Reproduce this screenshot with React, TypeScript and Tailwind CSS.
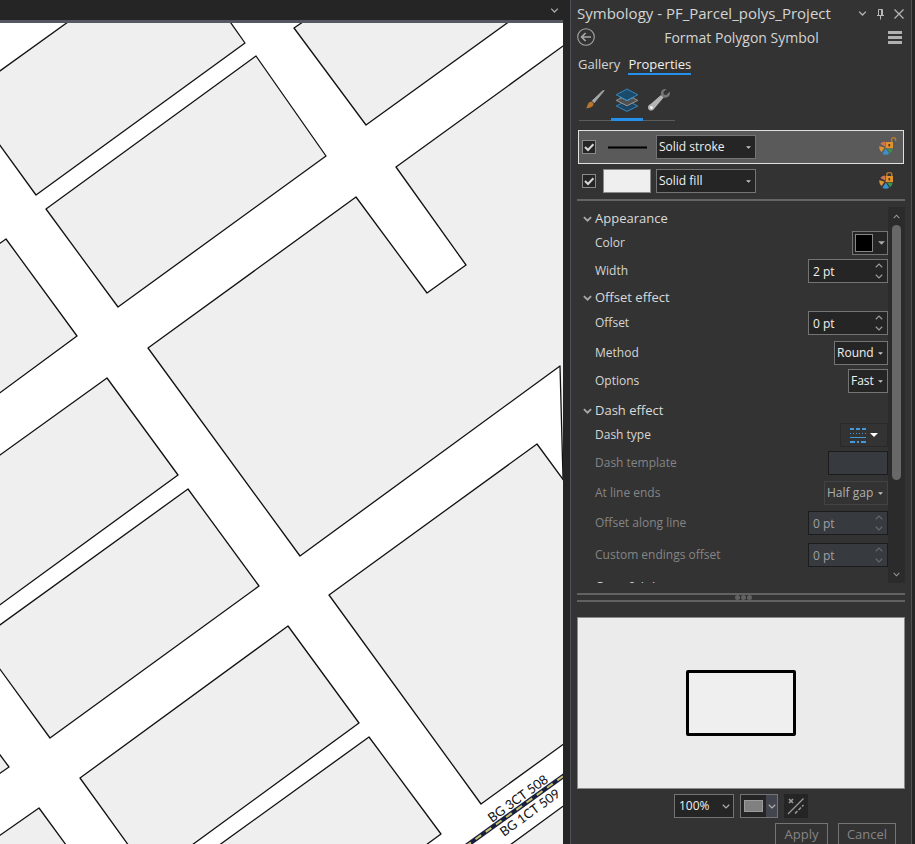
import type { ReactNode } from "react"
import clsx from "clsx"

const parcels = [
  "-14,81 86,9 221,9 245,43 36,195 -14,126",
  "256,56 326,156 118,307 46,209",
  "294,28 316,13 521,13 366,125",
  "570,41 396,167 466,265 427,293 356,197 148,348 300,556 560,366 563,478 564,560 900,560 900,-100",
  "537,444 900,938 900,500 481,804 329,595",
  "-14,253 6,239 77,336 -14,403",
  "-14,465 107,378 178,475 -14,615",
  "-14,635 188,489 259,586 50,738 -14,650",
  "288,626 359,723 166,864 142,864 80,778",
  "369,737 441,834 400,864 193,864",
  "-14,736 9,767 -14,783",
  "39,808 80,864 -14,864 -14,845",
  "900,560 900,900 484,864",
]

function MapView() {
  return (
    <section aria-label="Map" className="flex min-w-0 flex-1 flex-col bg-[#252525]">
      <div className="flex h-5 shrink-0 items-center justify-end pr-px">
        <button aria-label="Map views" className="flex size-4 items-center justify-center">
          <Chevron className="h-[5px] w-[9px] text-[#aaaaaa]" />
        </button>
      </div>
      <div className="min-h-0 flex-1 border-t-[3px] border-[#565861] bg-white">
        <svg viewBox="0 23 563 821" preserveAspectRatio="xMinYMin slice" className="size-full">
          <g fill="#efefef" stroke="#111" strokeWidth="1.3" strokeLinejoin="round">
            {parcels.map((points) => (
              <polygon key={points} points={points} />
            ))}
          </g>
          <path d="M455 854 L580 764" stroke="#191e3c" strokeWidth="4.6" />
          <path d="M455 854 L580 764" stroke="#c6c273" strokeWidth="2" strokeDasharray="7 5.6" />
          <g fill="#111" fontSize="13" className="font-['Lato',sans-serif]">
            <text transform="translate(492 823) rotate(-36)">BG 3CT 508</text>
            <text transform="translate(504 837) rotate(-36)">BG 1CT 509</text>
          </g>
        </svg>
      </div>
    </section>
  )
}

function Chevron({ className }: { className?: string }) {
  return (
    <svg viewBox="0 0 10 6" fill="none" stroke="currentColor" strokeWidth="1.5" className={className}>
      <path d="M1 0.8 L5 4.8 L9 0.8" />
    </svg>
  )
}

function Caret({ className }: { className?: string }) {
  return (
    <svg viewBox="0 0 8 4" fill="currentColor" className={className}>
      <path d="M0 0 H8 L4 4 Z" />
    </svg>
  )
}

function BrushIcon() {
  return (
    <svg viewBox="0 0 24 24" className="size-6">
      <path d="M21.2 2.6 L11.2 14.8 L9.2 12.8 L19.5 3 Z" fill="#a9a9a9" stroke="#a9a9a9" strokeWidth="0.8" />
      <path d="M8.4 13.4 L10.6 15.6 C10.6 18.6 7 20.6 3 20.2 C5 18.6 4 14 8.4 13.4 Z" fill="#b8752c" />
    </svg>
  )
}

function LayersIcon() {
  return (
    <svg viewBox="0 0 24 24" strokeWidth="1" className="size-6">
      <path d="M12 12.5 L22.8 18 L12 23.4 L1.2 18 Z" fill="#1c4664" stroke="#3487bd" />
      <path d="M12 7 L22.8 12.4 L12 17.8 L1.2 12.4 Z" fill="#505050" stroke="#969696" />
      <path d="M12 1 L22.8 6.8 L12 12.6 L1.2 6.8 Z" fill="#1b4b6b" stroke="#3487bd" />
      <path d="M5 9 L12 12.6 L19 9" fill="none" stroke="#4ba5de" strokeDasharray="2 1" />
    </svg>
  )
}

function WrenchIcon() {
  return (
    <svg viewBox="0 0 24 24" className="size-6">
      <path
        d="M22.6 3.8 L19.2 7 L16.8 6.4 L16.4 4 L19.6 1 C15.6 0.2 13 3.4 14.2 6.8 L16.6 9.4 C20.4 10.6 24.2 7.4 22.6 3.8 Z"
        fill="#77777a"
      />
      <path d="M14 7 L16.6 9.6 L7.4 20.6 C5.6 23.6 1.2 23.2 1 19.8 C0.8 17.8 2 16.8 3.4 16.2 Z" fill="#b5b5b5" />
      <circle cx="4.4" cy="19.6" r="1.3" fill="#ffffff" />
    </svg>
  )
}

function ColorLockIcon({ locked }: { locked: boolean }) {
  return (
    <svg viewBox="0 0 20 20" className="size-5">
      <path d="M8 4.4 V9.4 L3.4 7 C4.2 5.4 5.8 4.4 8 4.4 Z" fill="#cc7358" />
      <path d="M2.4 9 L7.6 10.8 L4.6 15 C2.6 13.6 2 11 2.4 9 Z" fill="#dd9234" />
      <path d="M8.8 11.6 L12.2 16.8 C10.4 18.2 7.2 18.2 5.4 16.8 Z" fill="#3b91cc" />
      <path d="M10 11.8 H15.6 C15.4 13.8 14.6 15 13.2 16.2 Z" fill="#38934a" />
      <rect x="8.6" y="5" width="7.4" height="6.2" fill="#df922f" />
      <path d="M12.3 7 V9.4" stroke="#473115" strokeWidth="1.6" />
      <path
        d={locked ? "M9.8 5 V3.2 Q9.8 1.6 12.3 1.6 Q14.8 1.6 14.8 3.2 V5" : "M14.6 5 V2.4 Q14.6 0.8 16.6 0.8 Q18.6 0.8 18.6 2.4 V4"}
        fill="none"
        stroke="#b87a2a"
        strokeWidth="1.4"
      />
    </svg>
  )
}

function DashIcon() {
  return (
    <svg viewBox="0 0 16 15" stroke="#429bd9" className="h-[15px] w-4">
      <path d="M0 1 H16" strokeWidth="2" strokeDasharray="4 2" />
      <path d="M0 5.5 H16" strokeWidth="1" strokeDasharray="1 2" />
      <path d="M0 9.5 H16" strokeWidth="1" />
      <path d="M0 14 H5 M7 14 H9 M11 14 H16" strokeWidth="2" />
    </svg>
  )
}

type SelectProps = {
  id: string
  value: string
  label?: string
  disabled?: boolean
  className?: string
}

function Select({ id, value, label, disabled, className }: SelectProps) {
  return (
    <div className={clsx("relative h-6", className)}>
      <select
        id={id}
        aria-label={label}
        disabled={disabled}
        className="block h-full w-full appearance-none border border-[#747474] bg-[#252526] pl-[2px] text-[12px] text-[#f0f0f0] disabled:border-[#434343] disabled:bg-[#333333] disabled:text-[#b0b0b0] disabled:opacity-100"
      >
        <option>{value}</option>
      </select>
      <Caret className="pointer-events-none absolute top-[11px] right-[5px] h-[3px] w-[5px] text-[#c4c4c4]" />
    </div>
  )
}

function Spinner({ id, value, disabled }: { id: string; value: string; disabled?: boolean }) {
  return (
    <div
      className={clsx(
        "flex h-6 w-20 border",
        disabled ? "border-[#1c1c1e] bg-[#373b40] text-[#a0a0a0]" : "border-[#747474] bg-[#252526] text-[#f0f0f0]"
      )}
    >
      <input id={id} defaultValue={value} disabled={disabled} className="h-full min-w-0 flex-1 pl-1 text-[12px]" />
      <div className={clsx("flex w-4 flex-col", disabled ? "text-[#65676b]" : "text-[#9c9c9c]")}>
        <button aria-label="Increase" disabled={disabled} className="flex flex-1 items-center justify-center">
          <Chevron className="h-[5px] w-2 rotate-180" />
        </button>
        <button aria-label="Decrease" disabled={disabled} className="flex flex-1 items-center justify-center">
          <Chevron className="h-[5px] w-2" />
        </button>
      </div>
    </div>
  )
}

function SectionHeader({ children, className = "h-7 pt-[2px]" }: { children: ReactNode; className?: string }) {
  return (
    <h2 className={clsx("flex items-center", className)}>
      <button className="flex items-center gap-[3px] text-[13px] font-normal text-[#dadada]">
        <Chevron className="h-[6px] w-[9px] stroke-2 text-[#a8a8a8]" />
        {children}
      </button>
    </h2>
  )
}

type RowProps = {
  label: string
  id: string
  disabled?: boolean
  className?: string
  children: ReactNode
}

function Row({ label, id, disabled, className, children }: RowProps) {
  return (
    <div className={clsx("flex items-center justify-between pl-3", className)}>
      <label htmlFor={id} className={clsx("text-[12px]", disabled ? "text-[#858585]" : "text-[#d6d6d6]")}>
        {label}
      </label>
      {children}
    </div>
  )
}

function LayerCheckbox({ label }: { label: string }) {
  return (
    <span className="relative flex size-[14px] shrink-0">
      <input
        type="checkbox"
        defaultChecked
        aria-label={label}
        className="peer size-full appearance-none border border-[#8a8a8a] bg-[#252526]"
      />
      <svg
        viewBox="0 0 14 14"
        fill="none"
        stroke="#d6d6d6"
        strokeWidth="2"
        className="pointer-events-none absolute inset-0 hidden size-full peer-checked:block"
      >
        <path d="M3 7 L6 10 L11.4 4.2" />
      </svg>
    </span>
  )
}

function SymbolLayer({ name, selected, children }: { name: string; selected?: boolean; children: ReactNode }) {
  return (
    <div
      className={clsx(
        "flex h-[34px] items-center border px-[3px]",
        selected ? "border-[#e0e0e0] bg-[#5a5a5a]" : "border-transparent"
      )}
    >
      <LayerCheckbox label={`Show ${name}`} />
      <div className="ml-[7px] flex h-6 w-12 items-center justify-center">{children}</div>
      <Select id={`type-${name}`} label="Layer type" value={name} className="ml-[5px] w-[100px]" />
      <button aria-label="Color lock" className="mr-[3px] ml-auto">
        <ColorLockIcon locked={!selected} />
      </button>
    </div>
  )
}

function PanelHeader() {
  return (
    <header className="text-[#d4d4d4]">
      <div className="flex h-[27px] items-center pr-px">
        <h1 className="flex-1 truncate text-[15px]">Symbology - PF_Parcel_polys_Project</h1>
        <div className="flex items-center gap-[9px] text-[#b8b8b8]">
          <button aria-label="Window options">
            <Chevron className="h-[5px] w-[9px]" />
          </button>
          <button aria-label="Auto hide">
            <svg viewBox="0 0 9 12" fill="none" stroke="currentColor" strokeWidth="1" className="h-3 w-[9px]">
              <path d="M2.5 7 V1.5 H6.5 V7 M5.5 1.5 V7 M1 7.5 H8 M4.5 7.5 V11.5" />
            </svg>
          </button>
          <button aria-label="Close">
            <svg viewBox="0 0 10 10" fill="none" stroke="currentColor" strokeWidth="1.2" className="size-[10px]">
              <path d="M0.5 0.5 L9.5 9.5 M9.5 0.5 L0.5 9.5" />
            </svg>
          </button>
        </div>
      </div>
      <div className="flex h-5 items-center justify-between pr-[3px]">
        <button aria-label="Back">
          <svg viewBox="0 0 18 18" fill="none" stroke="#a6a6a6" className="size-[18px]">
            <circle cx="9" cy="9" r="8.3" strokeWidth="1.1" />
            <path d="M14 9 H5 M8.6 5 L4.6 9 L8.6 13" strokeWidth="1.7" />
          </svg>
        </button>
        <p className="text-[14px]">Format Polygon Symbol</p>
        <button aria-label="Menu" className="flex flex-col gap-[2px]">
          <span className="h-[3px] w-[14px] bg-[#b0b0b0]" />
          <span className="h-[3px] w-[14px] bg-[#b0b0b0]" />
          <span className="h-[3px] w-[14px] bg-[#b0b0b0]" />
        </button>
      </div>
      <nav className="mt-2 flex h-5 gap-2 pl-px text-[13px] leading-[18px]">
        <button className="h-5 border-b-2 border-transparent">Gallery</button>
        <button className="h-5 border-b-2 border-[#2490ec] text-[#eeeeee]">Properties</button>
      </nav>
      <div className="mt-[9px] ml-[2px] flex h-[37px] w-24">
        <button aria-label="Symbol" className="flex flex-1 justify-center border-b border-[#5c5c5c] pt-1">
          <BrushIcon />
        </button>
        <button aria-label="Layers" className="flex flex-1 justify-center border-b-[3px] border-[#2490ec] pt-1">
          <LayersIcon />
        </button>
        <button aria-label="Structure" className="flex flex-1 justify-center border-b border-[#5c5c5c] pt-1">
          <WrenchIcon />
        </button>
      </div>
    </header>
  )
}

function PropertyList() {
  return (
    <div className="mt-[6px] flex min-h-0 flex-1">
      <div className="min-w-0 flex-1 overflow-hidden pl-[6px]">
        <SectionHeader className="h-6">Appearance</SectionHeader>
        <Row label="Color" id="color">
          <button
            id="color"
            className="flex h-6 w-9 items-center justify-between border border-[#747474] bg-[#252526] pr-[2px] pl-[2px]"
          >
            <span className="size-[18px] border border-[#858585] bg-black" />
            <Caret className="h-1 w-[7px] text-[#a8a8a8]" />
          </button>
        </Row>
        <Row label="Width" id="width" className="mt-1">
          <Spinner id="width" value="2 pt" />
        </Row>
        <SectionHeader>Offset effect</SectionHeader>
        <Row label="Offset" id="offset">
          <Spinner id="offset" value="0 pt" />
        </Row>
        <Row label="Method" id="method" className="mt-[6px]">
          <Select id="method" value="Round" className="w-[54px]" />
        </Row>
        <Row label="Options" id="options" className="mt-1">
          <Select id="options" value="Fast" className="w-10" />
        </Row>
        <SectionHeader className="h-[30px] pt-[6px]">Dash effect</SectionHeader>
        <Row label="Dash type" id="dash-type">
          <button id="dash-type" className="flex h-6 w-12 items-center gap-1 border border-[#292929] pl-[9px]">
            <DashIcon />
            <Caret className="h-1 w-2 text-white" />
          </button>
        </Row>
        <Row label="Dash template" id="dash-template" disabled className="mt-1">
          <input id="dash-template" disabled className="h-6 w-[60px] border border-[#1c1c1e] bg-[#373b40]" />
        </Row>
        <Row label="At line ends" id="line-ends" disabled className="mt-[6px]">
          <Select id="line-ends" value="Half gap" disabled className="w-16" />
        </Row>
        <Row label="Offset along line" id="offset-line" disabled className="mt-[6px]">
          <Spinner id="offset-line" value="0 pt" disabled />
        </Row>
        <Row label="Custom endings offset" id="endings" disabled className="mt-2">
          <Spinner id="endings" value="0 pt" disabled />
        </Row>
        <SectionHeader className="h-[39px]">Caps &amp; joins</SectionHeader>
      </div>
      <div className="flex w-[17px] flex-col items-center bg-[#2b2b2b] text-[#9a9a9a]">
        <button aria-label="Scroll up" className="flex h-[18px] items-center">
          <Chevron className="h-[5px] w-[7px] rotate-180" />
        </button>
        <div className="w-full flex-1 px-1">
          <div className="h-3/4 rounded-full bg-[#686868]" />
        </div>
        <button aria-label="Scroll down" className="flex h-[18px] items-center">
          <Chevron className="h-[5px] w-[7px]" />
        </button>
      </div>
    </div>
  )
}

function Preview() {
  return (
    <footer className="flex shrink-0 flex-col">
      <div className="mt-[10px] flex h-[9px] items-center justify-center gap-px border-y-2 border-[#626262] pb-px pl-1">
        <span className="size-[5px] rounded-full bg-[#626262]" />
        <span className="size-[5px] rounded-full bg-[#626262]" />
        <span className="size-[5px] rounded-full bg-[#626262]" />
      </div>
      <div className="mt-[15px] flex h-[172px] items-center justify-center border border-[#8a8a8a] bg-[#ebebeb]">
        <div className="h-[66px] w-[110px] rounded-[2px] border-[3px] border-black bg-[#efefef]" />
      </div>
      <div className="mt-[5px] flex justify-center gap-[6px]">
        <div className="relative h-6 w-[60px]">
          <select
            aria-label="Zoom"
            className="block size-full appearance-none border border-[#747474] bg-[#252526] pl-1 text-[12px] text-[#f0f0f0]"
          >
            <option>100%</option>
          </select>
          <Chevron className="pointer-events-none absolute top-[10px] right-1 h-[5px] w-2 text-[#b0b0b0]" />
        </div>
        <button aria-label="Preview background" className="flex h-6 w-[38px] border border-[#747474] bg-[#252526]">
          <span className="flex h-full flex-1 items-center justify-center">
            <span className="h-3 w-[19px] border border-[#9c9c9c] bg-[#808080]" />
          </span>
          <span className="flex h-full w-[11px] items-center justify-center bg-[#42454d]">
            <Chevron className="h-[5px] w-2 text-[#b0b0b0]" />
          </span>
        </button>
        <button aria-label="Show effects" className="flex size-6 items-center justify-center bg-[#252526]">
          <svg viewBox="0 0 18 18" fill="none" stroke="#9a9a9a" className="size-[18px]">
            <path d="M1 17 L16.5 1.5" strokeWidth="1.3" />
            <path d="M8 16.5 L16.5 8" strokeWidth="1.5" strokeDasharray="3.4 1.6" />
            <path d="M2 2 L6 6 M6 2 L2 6" strokeWidth="1.7" />
          </svg>
        </button>
      </div>
      <div className="mt-[5px] flex h-[21px] items-start justify-end gap-[10px] overflow-hidden pr-[9px] text-[13px] text-[#858585]">
        <button disabled className="h-6 w-[53px] shrink-0 border border-[#747474]">
          Apply
        </button>
        <button disabled className="h-6 w-[58px] shrink-0 border border-[#747474]">
          Cancel
        </button>
      </div>
    </footer>
  )
}

export default function App() {
  return (
    <div className="flex h-screen overflow-hidden bg-[#252525] font-['Open_Sans','Noto_Sans',sans-serif]">
      <MapView />
      <aside
        aria-label="Symbology"
        className="mr-[3px] ml-[7px] flex w-[342px] shrink-0 flex-col border-x border-[#4f5158] bg-[#333333] px-[6px]"
      >
        <PanelHeader />
        <div className="mt-[9px] mr-px ml-px">
          <SymbolLayer name="Solid stroke" selected>
            <span className="h-[3px] w-[39px] border-y border-[#2a2a2a] bg-black" />
          </SymbolLayer>
          <SymbolLayer name="Solid fill">
            <span className="size-full border border-[#8a8a8a] bg-[#efefef]" />
          </SymbolLayer>
        </div>
        <div className="mt-[1px] h-[2px] shrink-0 bg-[#656565]" />
        <PropertyList />
        <Preview />
      </aside>
    </div>
  )
}
